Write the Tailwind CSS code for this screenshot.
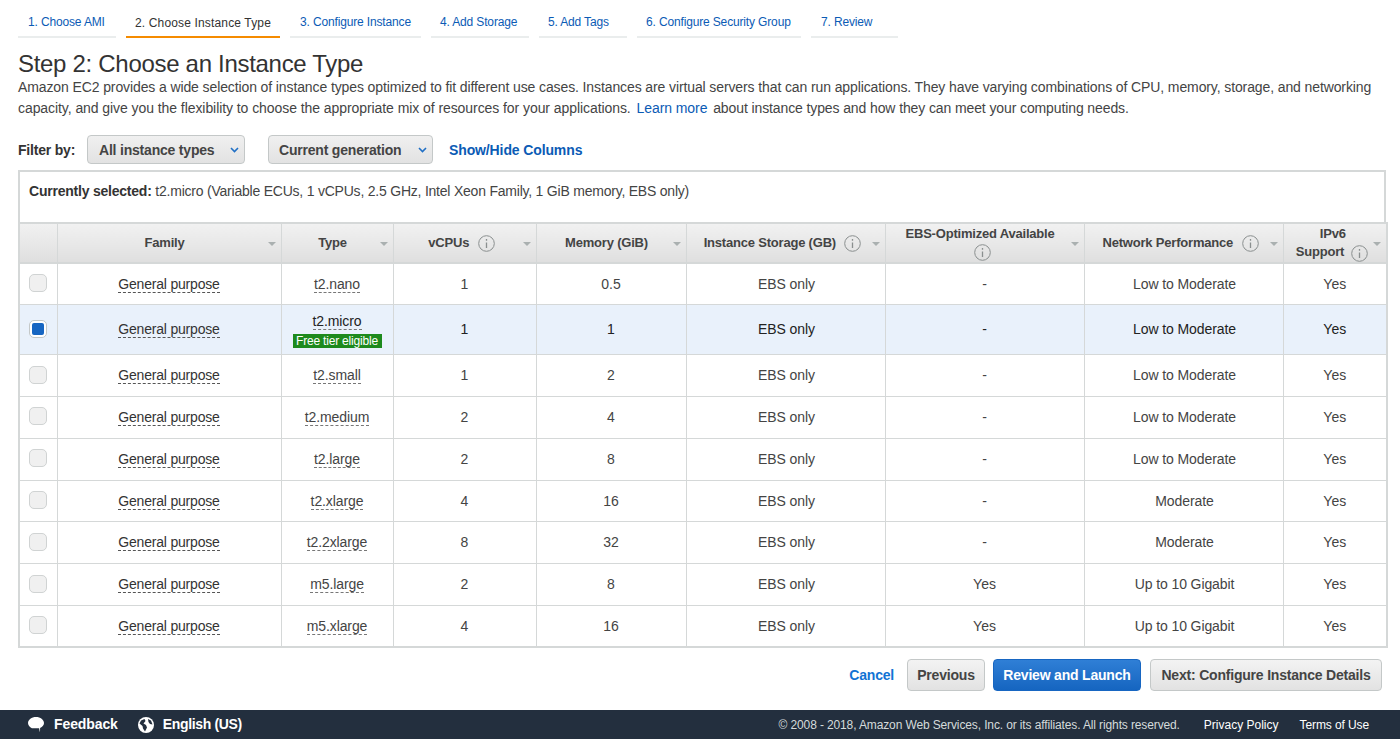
<!DOCTYPE html>
<html lang="en">
<head>
  <meta charset="UTF-8" />
  <title>Step 2: Choose an Instance Type</title>
  <script src="https://cdn.jsdelivr.net/npm/@tailwindcss/browser@4"></script>
</head>
<body class="bg-white text-[#444] h-[739px] overflow-hidden flex flex-col font-['Liberation_Sans',Arial,sans-serif]">

  <!-- Wizard tabs -->
  <nav class="flex gap-[10px] pl-[18px] pt-[8px] h-[38px] text-[12px] tracking-[-0.15px] whitespace-nowrap text-[#0b5bb5]">
    <a class="w-[98px] h-[30px] pl-[10px] border-b-[2px] border-[#eaeded] leading-[28px]">1. Choose AMI</a>
    <a class="w-[154px] h-[30px] pl-[9px] border-b-[2px] border-[#f58b00] leading-[30px] tracking-[0.15px] text-[#333]">2. Choose Instance Type</a>
    <a class="w-[131px] h-[30px] pl-[10px] border-b-[2px] border-[#eaeded] leading-[28px]">3. Configure Instance</a>
    <a class="w-[98px] h-[30px] pl-[9px] border-b-[2px] border-[#eaeded] leading-[28px]">4. Add Storage</a>
    <a class="w-[88px] h-[30px] pl-[9px] border-b-[2px] border-[#eaeded] leading-[28px]">5. Add Tags</a>
    <a class="w-[164px] h-[30px] pl-[9px] border-b-[2px] border-[#eaeded] leading-[28px]">6. Configure Security Group</a>
    <a class="w-[87px] h-[30px] pl-[10px] border-b-[2px] border-[#eaeded] leading-[28px]">7. Review</a>
  </nav>

  <main class="px-[18px] flex-1">
    <h1 class="text-[24px] tracking-[-0.3px] leading-[28px] mt-[12px] text-[#333]">Step 2: Choose an Instance Type</h1>
    <p class="text-[14px] tracking-[-0.11px] leading-[20.500px] text-[#444] -mt-[1px] w-[1368px]">
      Amazon EC2 provides a wide selection of instance types optimized to fit different use cases. Instances are virtual servers that can run applications. They have varying combinations of CPU, memory, storage, and networking
      <span class="tracking-[-0.07px]">capacity, and give you the flexibility to choose the appropriate mix of resources for your applications.
      <a class="text-[#0b5bb5] mx-[2px]">Learn more</a></span> about instance types and how they can meet your computing needs.
    </p>

    <!-- Filters -->
    <div class="flex items-center h-[29px] mt-[17px] text-[14px] leading-[16px] tracking-[-0.2px] font-bold">
      <span class="w-[69px] pt-[1px] text-[#333]">Filter by:</span>
      <div class="w-[158px] h-[29px] rounded-[4px] border border-[#c4c8c8] bg-gradient-to-b from-[#f0f0f0] to-[#e2e2e2] flex items-center justify-between pl-[11px] pr-[5px] pt-[1px] text-[#444]">
        All instance types
        <svg width="9" height="6" viewBox="0 0 9 6" fill="none" stroke="#1f6fc5" stroke-width="1.6"><path d="M1 1l3.500 3.500L8 1"/></svg>
      </div>
      <div class="w-[165px] h-[29px] ml-[23px] rounded-[4px] border border-[#c4c8c8] bg-gradient-to-b from-[#f0f0f0] to-[#e2e2e2] flex items-center justify-between pl-[10px] pr-[5px] pt-[1px] text-[#444]">
        Current generation
        <svg width="9" height="6" viewBox="0 0 9 6" fill="none" stroke="#1f6fc5" stroke-width="1.6"><path d="M1 1l3.500 3.500L8 1"/></svg>
      </div>
      <a class="ml-[16px] pt-[1px] tracking-[-0.12px] text-[#0b5bb5]">Show/Hide Columns</a>
    </div>

    <!-- Selected summary -->
    <div class="mt-[6px] h-[52px] w-[1368px] border-2 border-b-0 border-[#d5d8d8] pl-[9px] pt-[11px] text-[14px] tracking-[-0.22px] leading-[16px] text-[#444]">
      <b class="text-[#333]">Currently selected:</b> t2.micro (Variable ECUs, 1 vCPUs, 2.5 GHz, Intel Xeon Family, 1 GiB memory, EBS only)
    </div>

    <table class="w-[1368px] table-fixed border-collapse border-2 border-[#d5d8d8] text-[14px] text-center text-[#444]">
      <colgroup>
        <col class="w-[38px]"><col class="w-[224px]"><col class="w-[112px]"><col class="w-[143px]"><col class="w-[150px]"><col class="w-[199px]"><col class="w-[199px]"><col class="w-[199px]"><col class="w-[104px]">
      </colgroup>
      <thead id="cabecalho"></thead>
      <tbody id="linhas"></tbody>
    </table>

    <!-- Actions -->
    <div class="flex items-center justify-end w-[1364px] mt-[11px] text-[14px] tracking-[-0.2px] font-bold">
      <a class="text-[#1273d4] mr-[13px]">Cancel</a>
      <button class="w-[78px] h-[32px] rounded-[4px] border border-[#c4c8c8] bg-gradient-to-b from-[#f3f3f3] to-[#e2e2e2] text-[#444]">Previous</button>
      <button class="w-[148px] h-[32px] ml-[8px] rounded-[4px] border border-[#1766c2] bg-gradient-to-b from-[#2f7fd6] to-[#1565c0] text-white">Review and Launch</button>
      <button class="w-[232px] h-[32px] ml-[9px] rounded-[4px] border border-[#c4c8c8] bg-gradient-to-b from-[#f3f3f3] to-[#e2e2e2] text-[#444]">Next: Configure Instance Details</button>
    </div>
  </main>

  <!-- Footer -->
  <footer class="h-[29px] bg-[#232f3e] flex items-center text-white text-[14px] shrink-0">
    <svg class="ml-[27px]" width="18" height="17" viewBox="0 0 18 17" fill="#fff"><path d="M9 1C4.600 1 1 3.700 1 7.100c0 2.200 1.600 4.100 3.900 5.200h7.200l.7 3.700c.3-.4.3-2 .3-4.100C15.600 10.900 17 9.200 17 7.100 17 3.700 13.400 1 9 1z"/></svg>
    <b class="ml-[9px] tracking-[-0.1px]">Feedback</b>
    <svg class="ml-[20px]" width="16" height="16" viewBox="0 0 16 16"><circle cx="8" cy="8" r="8" fill="#fff"/><path d="M3 3.500l3.500-1.500 1 2-2 2.500 2.500 1.500 1 2.500-2 4-2-3-.5-2.500L1.500 6.500zM10 2l3 1.500 1.500 4-2.500-.5-1.500-2z" fill="#232f3e"/></svg>
    <b class="ml-[9px] tracking-[-0.35px]">English (US)</b>
    <span class="ml-auto text-[12px] tracking-[-0.125px] text-[#d5dbdb]">© 2008 - 2018, Amazon Web Services, Inc. or its affiliates. All rights reserved.</span>
    <span class="ml-[24px] text-[12px]">Privacy Policy</span>
    <span class="ml-[21px] mr-[31px] text-[12px] tracking-[-0.1px]">Terms of Use</span>
  </footer>

  <script>
    const info = `<svg class="inline-block" width="17" height="17" viewBox="0 0 17 17" fill="none" stroke="#8a8f8f"><circle cx="8.500" cy="8.500" r="7.800"/><path d="M8.500 7.500v5.500M8.500 4v1.700" stroke-width="1.300"/></svg>`;
    const seta = `<span class="absolute right-[5px] top-[18px] w-0 h-0 border-x-[4px] border-x-transparent border-t-[4px] border-t-[#aab0b0]"></span>`;

    const colunas = [
      ["", false], ["Family", false], ["Type", false], ["vCPUs", true], ["Memory (GiB)", false],
      ["Instance Storage (GB)", true], ["EBS-Optimized Available", true], ["Network Performance", true], ["IPv6 Support", true]
    ];

    const instancias = [
      ["t2.nano", 1, "0.5", "-", "Low to Moderate"],
      ["t2.micro", 1, "1", "-", "Low to Moderate"],
      ["t2.small", 1, "2", "-", "Low to Moderate"],
      ["t2.medium", 2, "4", "-", "Low to Moderate"],
      ["t2.large", 2, "8", "-", "Low to Moderate"],
      ["t2.xlarge", 4, "16", "-", "Moderate"],
      ["t2.2xlarge", 8, "32", "-", "Moderate"],
      ["m5.large", 2, "8", "Yes", "Up to 10 Gigabit"],
      ["m5.xlarge", 4, "16", "Yes", "Up to 10 Gigabit"]
    ];

    const thClasse = "relative h-[40px] p-0 border border-[#d5d8d8] border-b-2 bg-gradient-to-b from-[#f1f1f1] to-[#dfdfdf] text-[13px] tracking-[-0.2px] leading-[18px] font-bold text-[#444]";

    let cabecalho = "<tr>";
    colunas.forEach(([nome, temInfo], i) => {
      let conteudo = temInfo
        ? `<span class="block pr-[6px]">${nome} <span class="ml-[5px] align-middle">${info}</span></span>`
        : `<span class="block pr-[9px]">${nome}</span>`;
      if (nome === "EBS-Optimized Available") conteudo = `<span class="block pr-[9px]">${nome}</span><span class="block pr-[5px] -mt-[1px]">${info}</span>`;
      if (nome === "IPv6 Support") conteudo = `<span class="block pr-[4px]">IPv6</span><span class="block pr-[6px] h-[18px]">Support <span class="ml-[3px] align-middle">${info}</span></span>`;
      cabecalho += `<th class="${thClasse}">${conteudo}${i > 0 ? seta : ""}</th>`;
    });
    document.getElementById("cabecalho").innerHTML = cabecalho + "</tr>";

    const linhas = document.getElementById("linhas");
    const td = "p-0 border border-[#d5d8d8]";
    const tdTexto = "pl-[2px] pr-0 py-0 border border-[#d5d8d8] tracking-[-0.1px]";
    instancias.forEach(([tipo, cpu, mem, ebs, rede]) => {
      const selecionada = tipo === "t2.micro";
      const caixa = selecionada
        ? `<span class="flex items-center justify-center mx-auto mb-[2px] w-[18px] h-[18px] rounded-[5px] border border-[#c4c8c8] bg-white"><span class="block w-[12px] h-[12px] rounded-[2px] bg-[#1766c2]"></span></span>`
        : `<span class="block mx-auto mb-[2px] w-[18px] h-[18px] rounded-[5px] border border-[#d0d3d3] bg-[#f0f0f0]"></span>`;
      const selo = selecionada
        ? `<span class="block mx-auto w-[89px] h-[14px] mt-[2px] bg-[#1d8a1d] text-white text-[12px] tracking-[-0.2px] leading-[14px]">Free tier eligible</span>`
        : "";
      linhas.innerHTML += `
        <tr class="${selecionada ? "h-[50px] bg-[#e9f1fb] text-[#222]" : "h-[41.800px]"}">
          <td class="${td}">${caixa}</td>
          <td class="${td}"><span class="border-b border-dashed border-[#555] text-[#333] tracking-[-0.2px]">General purpose</span></td>
          <td class="${td}"><span class="border-b border-dashed border-[#777] tracking-[-0.1px]">${tipo}</span>${selo}</td>
          <td class="${td}">${cpu}</td>
          <td class="${td}">${mem}</td>
          <td class="${tdTexto}">EBS only</td>
          <td class="${td}">${ebs}</td>
          <td class="${tdTexto}">${rede}</td>
          <td class="${td}">Yes</td>
        </tr>`;
    });
  </script>
</body>
</html>
